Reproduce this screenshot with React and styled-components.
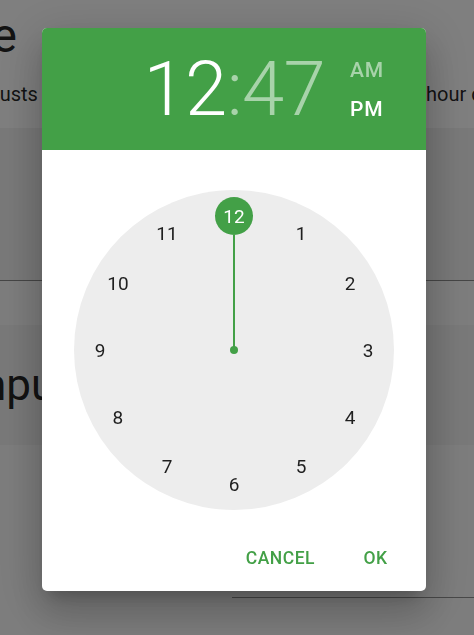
import React from "react";
import styled, { createGlobalStyle } from "styled-components";

const GREEN = "#43a047";

const GlobalStyle = createGlobalStyle`
  html, body {
    margin: 0;
    padding: 0;
    width: 474px;
    height: 635px;
    overflow: hidden;
    background: #fafafa;
  }
  body {
    font-family: Roboto, "Noto Sans", "Liberation Sans", Arial, sans-serif;
  }
  #root {
    width: 474px;
    height: 635px;
  }
`;

/* ---------- page behind the dialog ---------- */

const Page = styled.div`
  width: 474px;
  height: 635px;
  overflow: hidden;
  display: flex;
  flex-direction: column;
  background: #fafafa;
  white-space: nowrap;
`;

const Intro = styled.header`
  height: 128px;
  flex: none;
  box-sizing: border-box;
  padding-top: 8px;
  background: #ffffff;
`;

const Title = styled.h1`
  margin: 0 0 0 -91px;
  font-size: 48px;
  line-height: 56px;
  font-weight: 400;
  color: rgba(0, 0, 0, 0.87);
`;

const Lead = styled.p`
  margin: 16px 0 0 -136px;
  font-size: 20px;
  line-height: 28px;
  font-weight: 400;
  color: rgba(0, 0, 0, 0.87);
`;

const DemoBand = styled.section`
  height: 152px;
  flex: none;
  background: #f2f2f2;
  border-bottom: 1px solid rgba(0, 0, 0, 0.42);
`;

const Spacer = styled.div`
  height: 44px;
  flex: none;
`;

const Section = styled.section`
  height: 120px;
  flex: none;
  box-sizing: border-box;
  padding-top: 34px;
  background: #f2f2f2;
`;

const SectionTitle = styled.h2`
  margin: 0 0 0 -86px;
  font-size: 44px;
  line-height: 52px;
  font-weight: 400;
  color: rgba(0, 0, 0, 0.87);
`;

const FieldRow = styled.div`
  padding: 111px 0 0 232px;
`;

const Field = styled.div`
  height: 41px;
  border-bottom: 1px solid rgba(0, 0, 0, 0.42);
`;

/* ---------- dialog ---------- */

const Backdrop = styled.div`
  position: fixed;
  inset: 0;
  background: rgba(0, 0, 0, 0.5);
  display: flex;
  align-items: flex-start;
  justify-content: flex-start;
  padding: 28px 0 0 42px;
  box-sizing: border-box;
`;

const Dialog = styled.div`
  width: 384px;
  background: #ffffff;
  border-radius: 5px;
  overflow: hidden;
  display: flex;
  flex-direction: column;
  box-shadow: 0px 11px 15px -7px rgba(0, 0, 0, 0.2),
    0px 24px 38px 3px rgba(0, 0, 0, 0.14), 0px 9px 46px 8px rgba(0, 0, 0, 0.12);
`;

const Toolbar = styled.div`
  height: 122px;
  box-sizing: border-box;
  background: ${GREEN};
  display: flex;
  align-items: center;
  justify-content: flex-end;
  gap: 25px;
  padding-right: 42px;
`;

const TimeText = styled.div`
  display: flex;
  align-items: center;
  font-size: 76px;
  line-height: 1;
  font-weight: 300;
  letter-spacing: -0.00833em;
`;

const Seg = styled.span`
  color: ${(p) => (p.$active ? "#ffffff" : "rgba(255, 255, 255, 0.54)")};
`;

const AmPm = styled.div`
  display: flex;
  flex-direction: column;
  gap: 19px;
`;

const Period = styled.span`
  font-size: 21px;
  line-height: 20px;
  font-weight: 500;
  letter-spacing: 0.04em;
  color: ${(p) => (p.$active ? "#ffffff" : "rgba(255, 255, 255, 0.54)")};
`;

const ClockArea = styled.div`
  display: flex;
  justify-content: center;
  padding: 40px 0 16px;
`;

const Face = styled.div`
  position: relative;
  width: 320px;
  height: 320px;
  border-radius: 50%;
  background: #ededed;
`;

const Pointer = styled.div`
  position: absolute;
  left: 50%;
  bottom: 50%;
  width: 2.5px;
  height: 115px;
  margin-left: -1.25px;
  background: ${GREEN};
`;

const Pin = styled.div`
  position: absolute;
  left: 50%;
  top: 50%;
  width: 8px;
  height: 8px;
  margin: -4px 0 0 -4px;
  border-radius: 50%;
  background: ${GREEN};
`;

const Thumb = styled.div`
  position: absolute;
  left: 141px;
  top: 7px;
  width: 38px;
  height: 38px;
  border-radius: 50%;
  background: ${GREEN};
`;

const Num = styled.span`
  position: absolute;
  width: 38px;
  height: 38px;
  display: flex;
  align-items: center;
  justify-content: center;
  font-size: 19px;
  font-weight: 400;
  color: ${(p) => (p.$selected ? "#ffffff" : "rgba(0, 0, 0, 0.87)")};
`;

const Actions = styled.div`
  display: flex;
  justify-content: flex-end;
  gap: 11px;
  padding: 10px 11px 11px;
`;

const TextButton = styled.button`
  min-width: 79px;
  height: 44px;
  padding: 0 10px;
  border: 0;
  border-radius: 5px;
  background: transparent;
  color: ${GREEN};
  font-family: Roboto, "Noto Sans", Arial, sans-serif;
  font-size: 17.5px;
  font-weight: 500;
  letter-spacing: 0.02857em;
  text-transform: uppercase;
  cursor: pointer;
`;

const R = 134;
const numbers = Array.from({ length: 12 }, (_, i) => i + 1);

export default function App() {
  return (
    <>
      <GlobalStyle />
      <Page>
        <Intro>
          <Title>Time</Title>
          <Lead>
            Time picker adjusts to the user's locale and shows the 12 or 24 hour clock
            format.
          </Lead>
        </Intro>
        <DemoBand />
        <Spacer />
        <Section>
          <SectionTitle>Computed</SectionTitle>
        </Section>
        <FieldRow>
          <Field />
        </FieldRow>
      </Page>

      <Backdrop>
        <Dialog role="dialog">
          <Toolbar>
            <TimeText>
              <Seg $active>12</Seg>
              <Seg>:</Seg>
              <Seg>47</Seg>
            </TimeText>
            <AmPm>
              <Period>AM</Period>
              <Period $active>PM</Period>
            </AmPm>
          </Toolbar>

          <ClockArea>
            <Face>
              <Pointer />
              <Pin />
              <Thumb />
              {numbers.map((n) => {
                const a = (n * Math.PI) / 6;
                const x = 160 + R * Math.sin(a) - 19;
                const y = 160 - R * Math.cos(a) - 19;
                return (
                  <Num key={n} $selected={n === 12} style={{ left: x, top: y }}>
                    {n}
                  </Num>
                );
              })}
            </Face>
          </ClockArea>

          <Actions>
            <TextButton>Cancel</TextButton>
            <TextButton>OK</TextButton>
          </Actions>
        </Dialog>
      </Backdrop>
    </>
  );
}
